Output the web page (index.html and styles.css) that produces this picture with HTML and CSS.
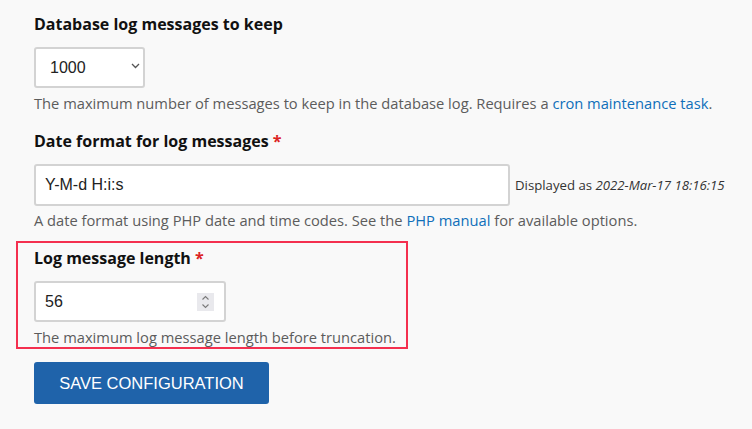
FILE: index.html
```html
<!DOCTYPE html>
<html>
<head>
<meta charset="utf-8">
<link rel="stylesheet" href="styles.css">
</head>
<body>
<form class="form">
  <div class="item item-first">
    <label class="label">Database log messages to keep</label>
    <div class="control">
      <select class="select">
        <option>1000</option>
      </select>
      <svg class="chevron" width="9" height="6" viewBox="0 0 9 6"><path d="M1 1 L4.5 4.5 L8 1" fill="none" stroke="#555" stroke-width="1.3"/></svg>
    </div>
    <div class="desc">The maximum number of messages to keep in the database log. Requires a <a href="#">cron maintenance task</a>.</div>
  </div>
  <div class="item">
    <label class="label">Date format for log messages <span class="req">*</span></label>
    <div class="row">
      <input class="text" type="text" value="Y-M-d H:i:s">
      <span class="suffix">Displayed as <em>2022-Mar-17 18:16:15</em></span>
    </div>
    <div class="desc">A date format using PHP date and time codes. See the <a href="#">PHP manual</a> for available options.</div>
  </div>
  <div class="item highlight">
    <label class="label">Log message length <span class="req">*</span></label>
    <div class="control">
      <input class="number" type="number" value="56">
      <svg class="spinner" width="17" height="18" viewBox="0 0 17 18"><rect width="17" height="18" fill="#e9e9ed"/><path d="M5.5 6.5 L8.5 3.5 L11.5 6.5" fill="none" stroke="#7a7a7a" stroke-width="1.1"/><path d="M5.5 11.5 L8.5 14.5 L11.5 11.5" fill="none" stroke="#7a7a7a" stroke-width="1.1"/></svg>
    </div>
    <div class="desc">The maximum log message length before truncation.</div>
  </div>
  <button class="button" type="button">Save configuration</button>
</form>
</body>
</html>
```

FILE: styles.css
```css
html, body {
  margin: 0;
  padding: 0;
  background: #f9f9f9;
}
body {
  font-family: "Open Sans", "Liberation Sans", sans-serif;
  color: #222;
}
.form {
  padding: 14px 0 0 34px;
}
.item {
  display: flex;
  flex-direction: column;
  align-items: flex-start;
  margin-bottom: 18px;
}
.label {
  font-weight: 700;
  font-size: 16px;
  line-height: 20px;
  color: #111;
  margin-bottom: 13px;
}
.req {
  color: #dc2323;
}
.control {
  position: relative;
  display: flex;
}
.select {
  -webkit-appearance: none;
  appearance: none;
  width: 111px;
  height: 41px;
  box-sizing: border-box;
  border: 2px solid #d3d3d3;
  border-radius: 3px;
  background: #fff;
  font-family: "Liberation Sans", Arial, sans-serif;
  font-size: 16px;
  color: #222;
  padding: 0 8px 0 14px;
  margin: 0;
}
.chevron {
  position: absolute;
  left: 97px;
  top: 16px;
  pointer-events: none;
}
.desc {
  margin-top: 5px;
  font-size: 14.7px;
  line-height: 20px;
  color: #5c5c5c;
}
.desc a {
  color: #0f6fb9;
  text-decoration: none;
}
.row {
  display: flex;
  align-items: center;
}
.text {
  width: 476px;
  height: 42px;
  box-sizing: border-box;
  border: 2px solid #d3d3d3;
  border-radius: 3px;
  background: #fff;
  font-family: "Liberation Sans", Arial, sans-serif;
  font-size: 16px;
  color: #222;
  padding: 0 9px;
  margin: 0;
}
.suffix {
  margin-left: 5px;
  font-size: 13.2px;
  color: #333;
}
.item .row + .desc {
  margin-top: 4px;
}
.highlight {
  width: 392px;
  box-sizing: border-box;
  margin-left: -18px;
  margin-top: -7px;
  margin-bottom: 13px;
  border: 2px solid #f4304f;
  padding: 5px 0 0 16px;
}
.number {
  -moz-appearance: textfield;
  width: 192px;
  height: 41px;
  box-sizing: border-box;
  border: 2px solid #d3d3d3;
  border-radius: 3px;
  background: #fff;
  font-family: "Liberation Sans", Arial, sans-serif;
  font-size: 16px;
  color: #222;
  padding: 0 10px 0 9px;
  margin: 0;
}
.number::-webkit-inner-spin-button,
.number::-webkit-outer-spin-button {
  -webkit-appearance: none;
  margin: 0;
}
.spinner {
  position: absolute;
  left: 163px;
  top: 12px;
  pointer-events: none;
}
.button {
  width: 235px;
  height: 42px;
  border: 0;
  border-radius: 3px;
  background: #1f63aa;
  color: #fff;
  font-family: "Liberation Sans", Arial, sans-serif;
  font-size: 16.5px;
  text-transform: uppercase;
  padding: 0;
}
```
